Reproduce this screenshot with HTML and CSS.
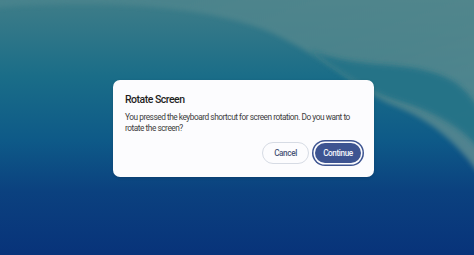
FILE: index.html
```html
<!DOCTYPE html>
<html>
<head>
  <link rel="stylesheet" href="styles.css">
</head>
<body>
  <svg class="wallpaper" width="474" height="255" viewBox="0 0 474 255">
    <defs>
      <linearGradient id="sea" x1="0" y1="0" x2="0" y2="1">
        <stop offset="0" stop-color="#3f7d88"/>
        <stop offset="0.3" stop-color="#1a6d88"/>
        <stop offset="0.55" stop-color="#0e5a88"/>
        <stop offset="0.75" stop-color="#0b417f"/>
        <stop offset="1" stop-color="#08337a"/>
      </linearGradient>
      <linearGradient id="foam" x1="0" y1="0" x2="1" y2="1">
        <stop offset="0" stop-color="#4a848e"/>
        <stop offset="0.6" stop-color="#5a8a8e"/>
        <stop offset="1" stop-color="#6a9494"/>
      </linearGradient>
      <filter id="soft"><feGaussianBlur stdDeviation="2.5"/></filter>
    </defs>
    <rect width="474" height="255" fill="url(#sea)"/>
    <!-- light wave across the top -->
    <path d="M-10 8 C80 0 200 2 270 32 C330 60 360 92 395 106 C430 120 455 140 480 175 L480 -10 L-10 -10 Z"
          fill="url(#foam)" opacity="0.75" filter="url(#soft)"/>
    <!-- darker teal fold under the wave -->
    <path d="M310 50 C360 70 400 60 440 75 C460 82 470 95 480 110 L480 150 C460 125 430 110 395 100 C360 88 335 68 310 50 Z"
          fill="#1c6f86" opacity="0.8" filter="url(#soft)"/>
  </svg>

  <div class="dialog">
    <h1 class="title">Rotate Screen</h1>
    <p class="text">You pressed the keyboard shortcut for screen rotation. Do you want to rotate the screen?</p>
    <div class="actions">
      <button class="btn btn-cancel">Cancel</button>
      <button class="btn btn-continue">Continue</button>
    </div>
  </div>
</body>
</html>
```

FILE: styles.css
```css
body {
  margin: 0;
  width: 474px;
  height: 255px;
  overflow: hidden;
  font-family: Roboto, "Noto Sans", sans-serif;
  display: flex;
  justify-content: center;
  align-items: flex-start;
  position: relative;
}

.wallpaper {
  position: absolute;
  left: 0;
  top: 0;
  z-index: 0;
}

.dialog {
  position: relative;
  z-index: 1;
  box-sizing: border-box;
  width: 261px;
  height: 97px;
  margin-top: 80px;
  margin-left: 13px;
  padding: 13px 11px 0 12px;
  background: #fcfcfe;
  border-radius: 7px;
  box-shadow: 0 1px 3px rgba(0,0,0,0.15);
}

.title {
  margin: 0;
  font-size: 10.5px;
  font-weight: 500;
  letter-spacing: -0.5px;
  color: #1f1f1f;
  line-height: 14px;
}

.text {
  margin: 5px 0 0;
  max-width: 228px;
  font-size: 8.3px;
  letter-spacing: -0.47px;
  line-height: 11px;
  color: #3c3c40;
}

.actions {
  display: flex;
  justify-content: flex-end;
  gap: 4px;
  margin-top: 8px;
}

.btn {
  font-family: inherit;
  font-size: 8.2px;
  font-weight: 500;
  letter-spacing: -0.4px;
  height: 22px;
  border-radius: 11px;
  padding: 0;
  cursor: pointer;
}

.btn-cancel {
  width: 47px;
  background: #fcfcfe;
  border: 1px solid #d6dbe4;
  color: #4a5679;
}

.btn-continue {
  width: 46px;
  height: 20px;
  margin: 1px 2px 0 2px;
  background: #3d5491;
  border: none;
  color: #f2f4fa;
  box-shadow: 0 0 0 1.5px #fcfcfe, 0 0 0 3px #3d5491;
}
```
